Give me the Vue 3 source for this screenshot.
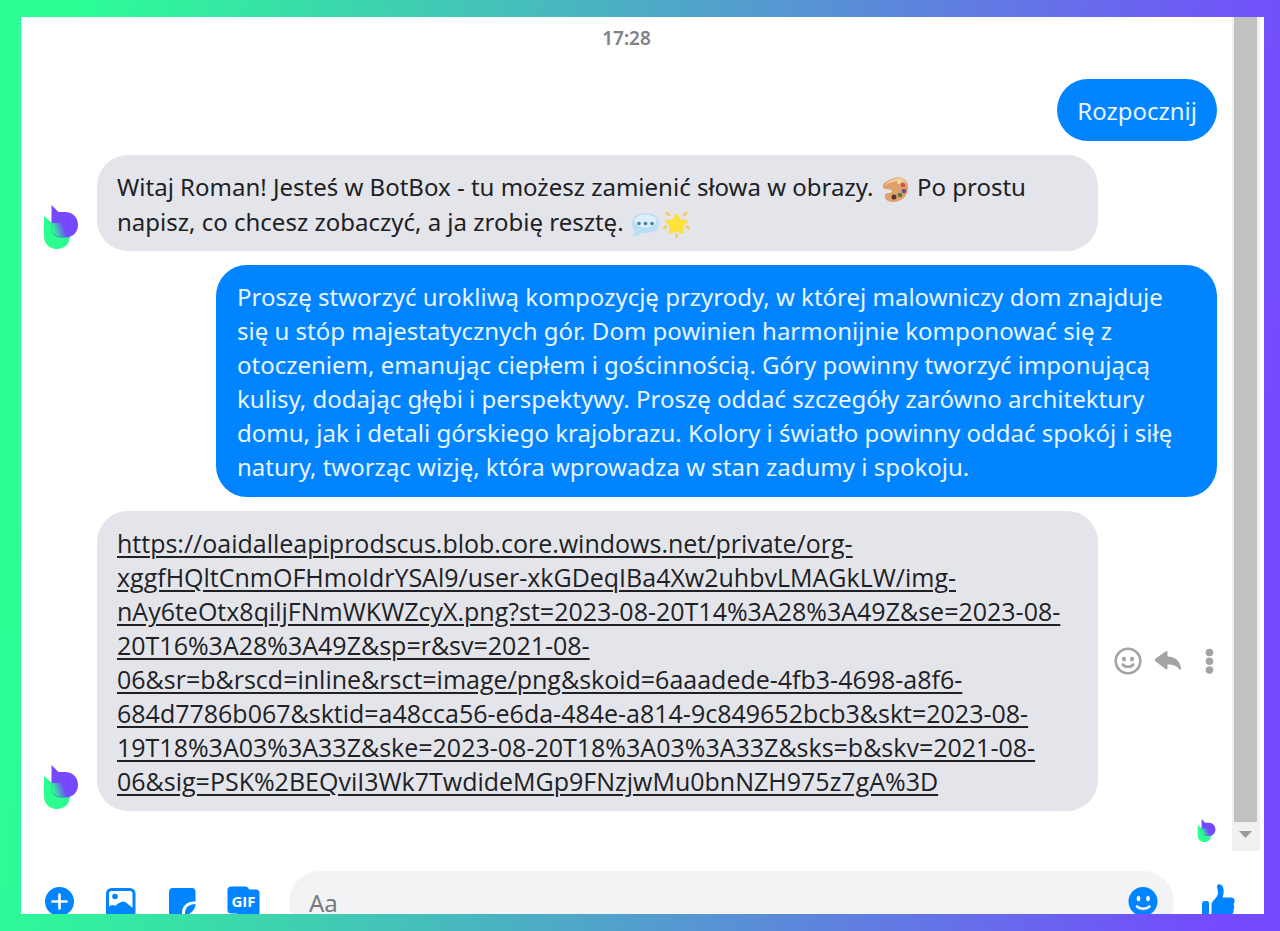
<script setup>
import { ref } from 'vue'

const draft = ref('')
const promptLines = [
  'Proszę stworzyć urokliwą kompozycję przyrody, w której malowniczy dom znajduje',
  'się u stóp majestatycznych gór. Dom powinien harmonijnie komponować się z',
  'otoczeniem, emanując ciepłem i gościnnością. Góry powinny tworzyć imponującą',
  'kulisy, dodając głębi i perspektywy. Proszę oddać szczegóły zarówno architektury',
  'domu, jak i detali górskiego krajobrazu. Kolory i światło powinny oddać spokój i siłę',
  'natury, tworząc wizję, która wprowadza w stan zadumy i spokoju.',
]
const linkLines = [
  'https://oaidalleapiprodscus.blob.core.windows.net/private/org-',
  'xggfHQltCnmOFHmoIdrYSAl9/user-xkGDeqIBa4Xw2uhbvLMAGkLW/img-',
  'nAy6teOtx8qiljFNmWKWZcyX.png?st=2023-08-20T14%3A28%3A49Z&se=2023-08-',
  '20T16%3A28%3A49Z&sp=r&sv=2021-08-',
  '06&sr=b&rscd=inline&rsct=image/png&skoid=6aaadede-4fb3-4698-a8f6-',
  '684d7786b067&sktid=a48cca56-e6da-484e-a814-9c849652bcb3&skt=2023-08-',
  '19T18%3A03%3A33Z&ske=2023-08-20T18%3A03%3A33Z&sks=b&skv=2021-08-',
  '06&sig=PSK%2BEQviI3Wk7TwdideMGp9FNzjwMu0bnNZH975z7gA%3D',
]
</script>

<template>
  <div class="frame">
    <svg class="defs" width="0" height="0" aria-hidden="true">
      <defs>
        <linearGradient id="blend" gradientUnits="userSpaceOnUse" x1="18" y1="29" x2="29" y2="25">
          <stop offset="0" stop-color="#2bff8f" />
          <stop offset="1" stop-color="#7549ff" />
        </linearGradient>
        <symbol id="logo" viewBox="0 0 44 46">
          <path d="M8 11L16 18H34V31C34 38 29 44 21 44C13 44 8 38 8 31Z" fill="#2bff8f" />
          <path d="M15.500 0L22.500 7H29C37 7 42 12.500 42 20C42 27 37 32.500 29 32.500H25C19 32.500 15.500 28 15.500 23Z" fill="#7549ff" />
          <path d="M15.500 18H23C29 18 34 23 33.500 32.300H26C20 32.300 15.500 28 15.500 23Z" fill="url(#blend)" />
        </symbol>
      </defs>
    </svg>

    <main class="panel">
      <section class="conversation">
        <div class="messages">
          <time class="stamp">17:28</time>

          <div class="row sent">
            <p class="bubble blue">Rozpocznij</p>
          </div>

          <div class="row received">
            <svg class="avatar" role="img" aria-label="BotBox"><use href="#logo" /></svg>
            <p class="bubble grey airy">
              <span class="line">Witaj Roman! Jesteś w BotBox - tu możesz zamienić słowa w obrazy.
                <svg class="emoji" viewBox="0 0 27 27" role="img" aria-label="paleta">
                  <path d="M12 2C20-1 27 4 26 13C25 21 19 26 11 26C6 26 2 23 3 19C4 16 10 18 10 15C10 12 2 15 1 11C0 7 6 4 12 2Z" fill="#dfa06c" />
                  <path d="M12 3C19 0 24 3 24 9C20 4 11 4 3 10C4 7 8 4 12 3Z" fill="#f4c99b" />
                  <circle cx="17" cy="6" r="2" fill="#efe1a2" /><circle cx="21" cy="9" r="2.300" fill="#d05046" />
                  <circle cx="22" cy="15" r="2.300" fill="#62518e" /><circle cx="18" cy="19" r="2.300" fill="#527c49" />
                  <circle cx="12" cy="21" r="2.500" fill="#5c3128" />
                </svg>
                Po prostu</span>
              <span class="line">napisz, co chcesz zobaczyć, a ja zrobię resztę.
                <svg class="emoji" viewBox="0 0 27 27" role="img" aria-label="dymek">
                  <path d="M13.500 2C22 2 27 6 27 13C27 19 22 22 13.500 22C11 22 9 22 7 24L1 26L3 20C1 18 0 16 0 13C0 6 5 2 13.500 2Z" fill="#b9dff5" />
                  <ellipse cx="13.500" cy="10" rx="11" ry="6.500" fill="#dceffa" />
                  <circle cx="7" cy="12.500" r="1.800" fill="#4e7d9c" /><circle cx="13.500" cy="12.500" r="1.800" fill="#4e7d9c" /><circle cx="20" cy="12.500" r="1.800" fill="#4e7d9c" />
                </svg><svg class="emoji" viewBox="0 0 27 27" role="img" aria-label="gwiazda">
                  <path d="M4 2L6 4M23 2L21 4M1 17L3 16M26 17L24 16M13.500 26V24" stroke="#f5cf57" stroke-width="2.800" stroke-linecap="round" />
                  <path d="M13.500 3L17 9L24.500 10L19 15.500L20.500 22.500L13.500 19.500L6.500 22.500L8 15.500L2.500 10L10 9Z" fill="#ffe435" stroke="#fbdc45" stroke-width="1.500" stroke-linejoin="round" />
                </svg></span>
            </p>
          </div>

          <div class="row sent">
            <p class="bubble blue wide">
              <span v-for="line in promptLines" :key="line" class="line">{{ line }}</span>
            </p>
          </div>

          <div class="row received">
            <svg class="avatar" role="img" aria-label="BotBox"><use href="#logo" /></svg>
            <p class="bubble grey">
              <a class="link" href="#"><span v-for="line in linkLines" :key="line" class="line">{{ line }}</span></a>
            </p>
            <div class="actions">
              <button type="button" aria-label="Dodaj reakcję">
                <svg width="28" height="28" viewBox="0 0 28 28">
                  <circle cx="14" cy="14" r="12.300" fill="none" stroke="#a3a3a3" stroke-width="2.600" />
                  <circle cx="10" cy="12" r="2.200" fill="#a3a3a3" /><circle cx="18" cy="12" r="2.200" fill="#a3a3a3" />
                  <path d="M8.800 17.500C10.500 20.500 17.500 20.500 19.200 17.500" fill="none" stroke="#a3a3a3" stroke-width="2.600" stroke-linecap="round" />
                </svg>
              </button>
              <button type="button" aria-label="Odpowiedz">
                <svg width="28" height="28" viewBox="0 0 28 28">
                  <path d="M0 12L10.500 4.500Q12.500 3.500 12.500 5.500V9.500C20.500 9.500 25.500 14.500 26 21.500Q26 23.500 24.500 22.500C21.500 18.500 17.500 17.500 12.500 17.500V21Q12.500 23.500 10.500 22L0 14Q-1.500 13 0 12Z" fill="#a3a3a3" />
                </svg>
              </button>
              <button type="button" aria-label="Więcej">
                <svg width="28" height="28" viewBox="0 0 28 28" fill="#a3a3a3">
                  <circle cx="13.500" cy="5.500" r="3.800" /><circle cx="13.500" cy="14.200" r="3.800" /><circle cx="13.500" cy="23" r="3.800" />
                </svg>
              </button>
            </div>
          </div>

          <div class="receipt">
            <svg width="24" height="24" role="img" aria-label="Wyświetlono"><use href="#logo" /></svg>
          </div>
        </div>

        <div class="scrollbar" aria-hidden="true">
          <div class="thumb"></div>
          <svg class="down" viewBox="0 0 28 29"><path d="M7 9H20L13.500 16Z" fill="#9b9b9b" /></svg>
        </div>
      </section>

      <form class="composer" @submit.prevent>
        <button type="button" aria-label="Więcej opcji">
          <svg viewBox="0 0 36 36"><circle cx="18.500" cy="17.500" r="14.500" fill="#0084ff" /><path d="M18.500 10.500V24.500M11.500 17.500H25.500" stroke="#fff" stroke-width="2.600" stroke-linecap="round" /></svg>
        </button>
        <button type="button" aria-label="Załącz zdjęcie">
          <svg viewBox="0 0 36 36">
            <rect x="4.500" y="5.500" width="26.500" height="27" rx="4" fill="#fff" stroke="#0084ff" stroke-width="3" />
            <circle cx="12" cy="12.500" r="2.800" fill="#0084ff" />
            <path d="M4 25C7 21.500 9 20 12 22C16 19 19 16 23 18.500L31 25V32H4Z" fill="#0084ff" />
          </svg>
        </button>
        <button type="button" aria-label="Wybierz naklejkę">
          <svg viewBox="0 0 36 36">
            <path d="M8 4H27Q30.500 4 30.500 8V17.500H29C22 17.500 17 22 17 29V32H8Q4 32 4 28V8Q4 4 8 4Z" fill="#0084ff" />
            <path d="M20 32V29C20 23.500 24 20 30.500 20C30.500 25 26 30 20 32Z" fill="#0084ff" />
          </svg>
        </button>
        <button type="button" aria-label="Wybierz GIF">
          <svg viewBox="0 0 36 36">
            <path d="M4.500 2.500H18.500Q20.500 2.500 21.500 4.500L22.500 5.500H29Q32.500 5.500 32.500 9V33H13L10 29.500H4.500Q.5 29.500 .5 26V6Q.5 2.500 4.500 2.500Z" fill="#0084ff" />
            <text x="16.500" y="23" text-anchor="middle" class="gif">GIF</text>
          </svg>
        </button>
        <div class="field">
          <input v-model="draft" type="text" placeholder="Aa" aria-label="Wiadomość" />
          <button type="button" aria-label="Wybierz emoji">
            <svg viewBox="0 0 36 36">
              <circle cx="18" cy="17.500" r="14.500" fill="#0084ff" />
              <ellipse cx="13.500" cy="14.500" rx="1.900" ry="2.700" fill="#f3f3f5" /><ellipse cx="23" cy="14.500" rx="1.900" ry="2.700" fill="#f3f3f5" />
              <path d="M12 22.500C15.500 25.500 21 25.500 24.500 22.500" fill="none" stroke="#f3f3f5" stroke-width="2.600" stroke-linecap="round" />
            </svg>
          </button>
        </div>
        <button type="button" aria-label="Wyślij polubienie">
          <svg viewBox="0 0 36 36" fill="#0084ff">
            <path d="M5 17H7Q9 17 9 19V36H2V20Q2 17 5 17Z" />
            <path d="M11.500 36V20.500C11.500 17 18 14 18 8.500L17 2.500Q17 .3 19 .3C23.500 .3 25 7 22.500 13.500H31Q35 14 34.500 17Q34.500 19 33.500 20Q35 23 33.500 26Q34 29 31.500 31L30 36Z" />
          </svg>
        </button>
      </form>
    </main>
  </div>
</template>

<style>
body {
  margin: 0;
}
</style>

<style scoped>
.frame {
  box-sizing: border-box;
  display: flex;
  min-height: 100vh;
  padding: 17px 16px 17px 21px;
  background: linear-gradient(96deg, #2bff95 5%, #7549ff 96%);
  font-family: "Noto Sans", "Open Sans", sans-serif;
  font-size: 24px;
  line-height: 34px;
}
.defs {
  position: absolute;
}
.panel {
  flex: 1;
  min-width: 0;
  display: flex;
  flex-direction: column;
  background: #fff;
}
.conversation {
  flex: 1;
  display: flex;
}
.messages {
  flex: 1;
  min-width: 0;
  display: flex;
  flex-direction: column;
  gap: 14px;
  padding: 4px 15px 0;
}
.stamp {
  height: 44px;
  text-align: center;
  font-size: 19px;
  font-weight: 600;
  color: #808186;
}
.row {
  display: flex;
}
.sent {
  justify-content: flex-end;
}
.received {
  align-items: flex-end;
  position: relative;
  padding-right: 119px;
}
.avatar {
  flex: none;
  width: 44px;
  height: 46px;
  margin-right: 17px;
}
.bubble {
  box-sizing: border-box;
  margin: 0;
  padding: 15px 20px 13px;
  border-radius: 31px;
  white-space: nowrap;
}
.blue {
  background: #0084ff;
  color: #e9f5ff;
}
.wide {
  flex: 1;
  margin-left: 180px;
  padding-left: 21px;
}
.grey {
  flex: 1;
  background: #e4e5eb;
  color: #202124;
}
.airy {
  padding: 14px 20px 12px;
  line-height: 35px;
}
.line {
  display: block;
}
.emoji {
  width: 27px;
  height: 27px;
  margin: 0 2px;
  vertical-align: -7px;
}
.link {
  color: inherit;
  font-family: "Open Sans", "Noto Sans", sans-serif;
  font-size: 25px;
  text-decoration: underline;
  text-decoration-thickness: 2px;
  text-underline-offset: 3px;
}
button {
  display: flex;
  flex: none;
  padding: 0;
  border: 0;
  background: none;
  cursor: pointer;
}
.actions {
  position: absolute;
  top: 0;
  bottom: 0;
  right: 0;
  width: 119px;
  box-sizing: border-box;
  padding-left: 16px;
  display: flex;
  align-items: center;
  gap: 13px;
}
.receipt {
  display: flex;
  justify-content: flex-end;
  height: 26px;
  align-items: flex-start;
}
.receipt svg {
  margin-top: -6px;
}
.scrollbar {
  flex: none;
  display: flex;
  flex-direction: column;
  width: 28px;
  margin-right: 4px;
  background: #f1f1f1;
}
.thumb {
  flex: 1;
  margin: 0 3px 0 2px;
  background: #c1c1c1;
}
.down {
  width: 28px;
  height: 29px;
}
.composer {
  box-sizing: border-box;
  flex: none;
  display: flex;
  align-items: flex-start;
  gap: 26px;
  height: 63px;
  padding: 20px 28px 0 20px;
  overflow: hidden;
}
.composer button {
  margin-top: 13px;
}
.composer button svg {
  width: 36px;
  height: 36px;
}
.gif {
  font: 700 15px "Open Sans", sans-serif;
  fill: #fff;
}
.field {
  flex: 1;
  min-width: 0;
  box-sizing: border-box;
  display: flex;
  height: 62px;
  padding: 0 13px 0 20px;
  border-radius: 31px;
  background: #f3f3f5;
}
.field input {
  flex: 1;
  min-width: 0;
  height: 62px;
  padding: 0;
  border: 0;
  outline: 0;
  background: none;
  font: inherit;
  color: #202124;
}
.field input::placeholder {
  color: #77797e;
  opacity: 1;
}
</style>
